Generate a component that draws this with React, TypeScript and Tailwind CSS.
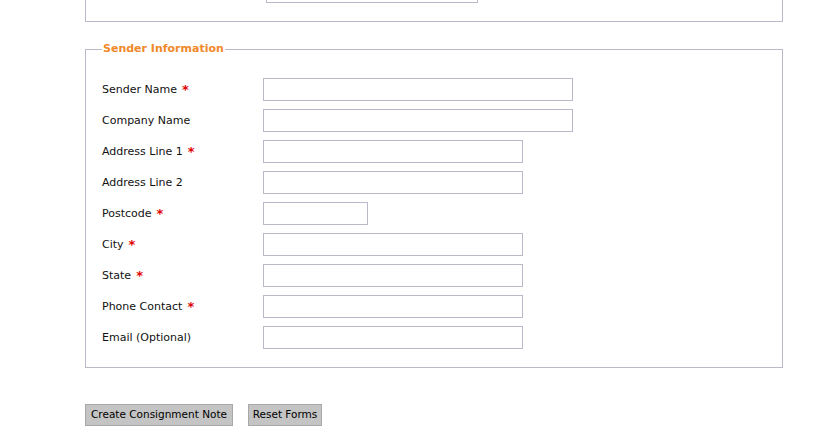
import React from 'react';

type Field = { label: string; required?: boolean; width: string };

const fields: Field[] = [
  { label: 'Sender Name', required: true, width: 'w-[310px]' },
  { label: 'Company Name', width: 'w-[310px]' },
  { label: 'Address Line 1', required: true, width: 'w-[260px]' },
  { label: 'Address Line 2', width: 'w-[260px]' },
  { label: 'Postcode', required: true, width: 'w-[105px]' },
  { label: 'City', required: true, width: 'w-[260px]' },
  { label: 'State', required: true, width: 'w-[260px]' },
  { label: 'Phone Contact', required: true, width: 'w-[260px]' },
  { label: 'Email (Optional)', width: 'w-[260px]' },
];

export default function App() {
  return (
    <div
      className="w-[827px] h-[442px] overflow-hidden bg-white text-[11px] text-black"
      style={{ fontFamily: '"DejaVu Sans", Verdana, sans-serif' }}
    >
      <div className="ml-[85px] w-[698px] flex flex-col">
        {/* tail end of the previous fieldset */}
        <div className="flex h-[22px] border-x border-b border-[#b9b9c9]">
          <div className="ml-[180px] -mt-[20px] h-[23px] w-[212px] border border-[#b9b9c9]" />
        </div>

        <fieldset className="mt-[20px] border border-[#b9b9c9] pl-[16px] pb-[18px]">
          <legend className="px-[1px] text-[11px] font-bold text-[#f0892a] leading-[14px]">
            Sender Information
          </legend>
          <div className="mt-[22px] flex flex-col gap-[8px]">
            {fields.map((f) => (
              <div key={f.label} className="flex items-center h-[23px]">
                <label className="flex w-[161px] items-center text-[11px] leading-none text-[#111]">
                  {f.label}
                  {f.required && (
                    <span className="ml-[5px] text-[13px] leading-none font-bold text-[#e00000]">*</span>
                  )}
                </label>
                <input
                  type="text"
                  className={`${f.width} h-[23px] border border-[#b9b9c9] bg-white outline-none`}
                />
              </div>
            ))}
          </div>
        </fieldset>

        <div className="mt-[36px] flex gap-[15px]">
          <button className="h-[22px] w-[148px] whitespace-nowrap border border-[#a8a8a8] bg-[#c4c4c4] text-[10.5px] text-black">
            Create Consignment Note
          </button>
          <button className="h-[22px] w-[74px] whitespace-nowrap border border-[#a8a8a8] bg-[#c4c4c4] text-[10.5px] text-black">
            Reset Forms
          </button>
        </div>
      </div>
    </div>
  );
}
